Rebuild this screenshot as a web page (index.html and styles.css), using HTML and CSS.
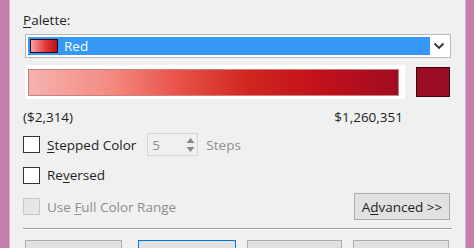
FILE: index.html
```html
<!DOCTYPE html>
<html>
<head>
<meta charset="utf-8">
<link rel="stylesheet" href="styles.css">
</head>
<body>
<div class="frame">
  <div class="edge"></div>
  <div class="dialog">
    <div class="label"><u>P</u>alette:</div>
    <div class="select">
      <div class="sel-fill">
        <span class="mini-swatch"></span>
        <span class="sel-text">Red</span>
      </div>
      <div class="arrow">
        <svg width="12" height="8" viewBox="0 0 12 8"><path d="M1.5 1.5 L6 6 L10.5 1.5" fill="none" stroke="#333" stroke-width="1.8"/></svg>
      </div>
    </div>
    <div class="grad-row">
      <div class="grad-frame"><div class="grad"></div></div>
      <div class="end-swatch"></div>
    </div>
    <div class="values">
      <span>($2,314)</span>
      <span>$1,260,351</span>
    </div>
    <div class="row stepped">
      <span class="cb"></span>
      <span class="cb-label"><u>S</u>tepped Color</span>
      <div class="spin">
        <span class="spin-val">5</span>
        <span class="spin-btns">
          <svg width="9" height="18" viewBox="0 0 9 18"><path d="M0.5 7 L4.5 2 L8.5 7 Z" fill="#8a8a8a"/><path d="M0.5 11 L4.5 16 L8.5 11 Z" fill="#8a8a8a"/></svg>
        </span>
      </div>
      <span class="dim steps">Steps</span>
    </div>
    <div class="row reversed">
      <span class="cb"></span>
      <span class="cb-label">Re<u>v</u>ersed</span>
    </div>
    <div class="row full">
      <span class="cb disabled"></span>
      <span class="cb-label dim">Use <u>F</u>ull Color Range</span>
      <button class="btn adv">A<u>d</u>vanced &gt;&gt;</button>
    </div>
    <div class="sep"></div>
    <div class="buttons">
      <button class="btn b b1"></button>
      <button class="btn b b2 focus"></button>
      <button class="btn b b3"></button>
      <button class="btn b b4"></button>
    </div>
  </div>
  <div class="edge right"></div>
</div>
</body>
</html>
```
FILE: styles.css
```css
html, body {
  margin: 0;
  padding: 0;
  width: 474px;
  height: 248px;
  overflow: hidden;
  background: #f0f0f0;
  font-family: "Open Sans", "Noto Sans", "Liberation Sans", sans-serif;
  font-size: 13.5px;
  color: #1e1e1e;
}
u { text-decoration: underline; text-underline-offset: 2px; text-decoration-thickness: 1px; }
.frame { display: flex; height: 248px; width: 474px; }
.edge { width: 9px; background: #c37eaa; border-right: 1px solid #d9b3cb; flex: none; }
.edge.right { border-right: none; border-left: 1px solid #d9b3cb; width: 8px; }
.dialog { flex: 1; min-width: 0; padding: 11px 0 0 13px; box-sizing: border-box; }
.label { height: 18px; line-height: 18px; }
.select {
  margin: 5px 14px 0 2px;
  height: 24px;
  box-sizing: border-box;
  border: 1px solid #b9b9b9;
  background: #fff;
  display: flex;
  padding: 2px;
}
.sel-fill {
  flex: 1;
  background: #3597f6;
  display: flex;
  align-items: center;
}
.mini-swatch {
  width: 26px; height: 12px;
  margin-left: 2px;
  border: 1px solid #2a0a10;
  background: linear-gradient(to right, #f7a3a3, #e33a3a 55%, #b70f1c);
}
.sel-text { color: #fff; margin-left: 6px; line-height: 18px; }
.arrow { width: 18px; display: flex; align-items: center; justify-content: center; }
.grad-row { display: flex; align-items: center; margin: 7px 15px 0 2px; height: 34px; }
.grad-frame {
  width: 380px; height: 34px; box-sizing: border-box;
  background: #fff;
  padding: 4px 6px 3px 3px;
}
.grad {
  height: 100%;
  box-sizing: border-box;
  border: 1px solid #c98080;
  background: linear-gradient(to right, #f4b3b1, #f58a80 22%, #e8534a 40%, #d0251e 60%, #c0101a 80%, #a00c22);
}
.end-swatch {
  width: 34px; height: 30px; box-sizing: border-box;
  margin-left: auto;
  background: #9a0d22;
  border: 1px solid #3a0810;
}
.values { display: flex; justify-content: space-between; margin: 9px 62px 0 0; height: 18px; line-height: 18px; }
.row { display: flex; align-items: center; }
.cb {
  width: 17px; height: 17px; box-sizing: border-box;
  border: 1px solid #333;
  background: #fff;
  flex: none;
}
.cb.disabled { border-color: #c8c8c8; background: #e6e6e6; }
.cb-label { margin-left: 7px; }
.dim { color: #8d8d8d; }
.stepped { margin-top: 7px; height: 23px; }
.spin {
  margin-left: 11px;
  width: 51px; height: 23px; box-sizing: border-box;
  border: 1px solid #d5d5d5;
  display: flex; align-items: center;
  color: #8d8d8d;
}
.spin-val { flex: 1; padding-left: 4px; }
.spin-btns { width: 14px; display: flex; justify-content: center; }
.steps { margin-left: 8px; }
.reversed { margin-top: 10px; height: 18px; }
.full { margin-top: 9px; height: 27px; }
.btn {
  font: inherit;
  background: #e1e1e1;
  border: 1px solid #adadad;
  box-sizing: border-box;
  padding: 0;
  color: #1e1e1e;
}
.adv { margin-left: auto; margin-right: 15px; width: 96px; height: 27px; }
.sep { margin: 8px 13px 0 0; height: 0; border-top: 1px solid #a0a0a0; border-bottom: 1px solid #fff; }
.buttons { display: flex; margin: 10px 0 0 2px; }
.b { height: 26px; flex: none; }
.b1 { width: 97px; }
.b2 { width: 98px; margin-left: 16px; }
.b3 { width: 95px; margin-left: 11px; }
.b4 { width: 96px; margin-left: 11px; }
.focus { border: 1px solid #0078d7; }
```
